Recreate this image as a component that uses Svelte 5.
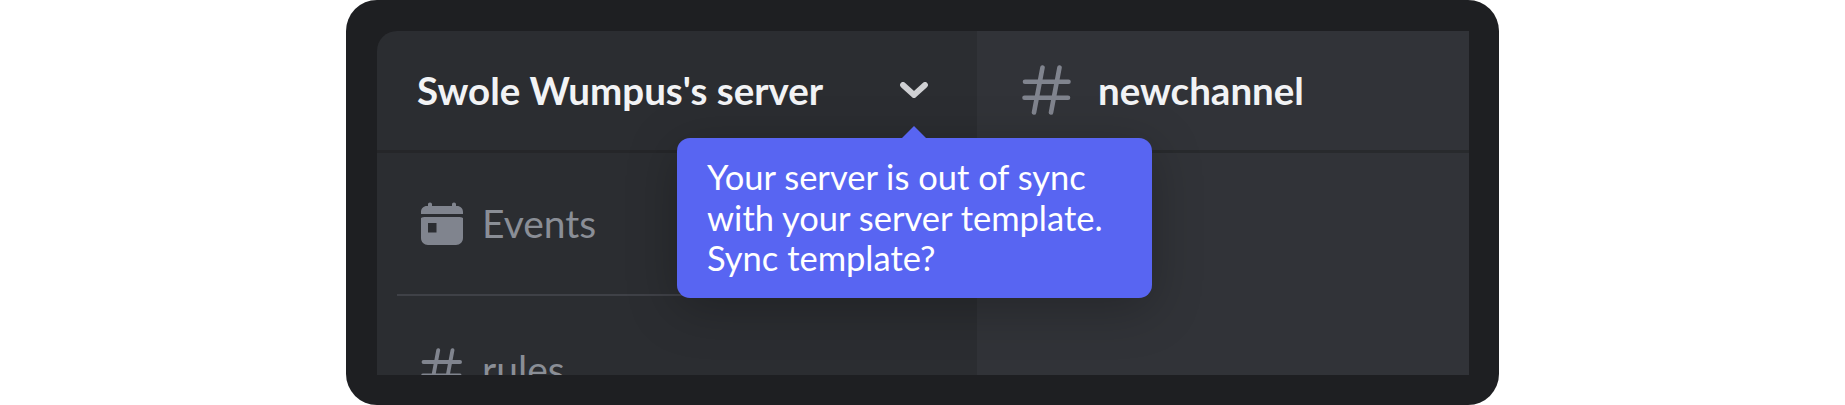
<script lang="ts">
    const tooltip = ["Your server is out of sync", "with your server template.", "Sync template?"];
</script>

{#snippet hash(cls: string)}
    <svg class={cls} viewBox="0 0 50 50" fill="none" stroke="currentColor" stroke-width="4.6" stroke-linecap="round">
        <path d="M20.5 2.5 12 47.5M37.5 2.5 29 47.5M3 16.7H46.5M2.5 32.7H46" />
    </svg>
{/snippet}

<div class="page">
    <div class="frame">
        <div class="app">
            <aside class="sidebar">
                <header class="bar server-bar">
                    <span class="server-name">Swole Wumpus's server</span>
                    <svg class="chevron" viewBox="0 0 28 16" fill="none" stroke="currentColor" stroke-width="5.8" stroke-linecap="round" stroke-linejoin="miter">
                        <path d="M3 3l11 10L25 3" />
                    </svg>
                </header>
                <div class="row events">
                    <svg class="calendar" viewBox="0 0 42 44" fill="currentColor">
                        <path d="M9 1.500c1.300 0 2 .8 2 2V5h20V3.500c0-1.200.7-2 2-2s2 .8 2 2V5h1c3.500 0 6 2.500 6 6v2H0v-2c0-3.500 2.500-6 6-6h1V3.500c0-1.200.7-2 2-2z" />
                        <path fill-rule="evenodd" d="M6 16h30c3.300 0 6 .5 6 1v20c0 3.900-3.100 7-7 7H7c-3.900 0-7-3.100-7-7V17c0-.5 2.700-1 6-1zm1 6v9.500h8.500V22H7z" />
                    </svg>
                    <span class="label">Events</span>
                </div>
                <div class="divider"></div>
                <div class="row rules">
                    {@render hash("rules-hash")}
                    <span class="label">rules</span>
                </div>
            </aside>
            <main class="main">
                <header class="bar channel-bar">
                    {@render hash("channel-hash")}
                    <span class="channel-name">newchannel</span>
                </header>
            </main>
            <div class="tooltip" role="tooltip">
                {#each tooltip as line}
                    <div>{line}</div>
                {/each}
            </div>
        </div>
    </div>
</div>

<style>
    :global(body) {
        margin: 0;
        background: #fff;
    }

    .page {
        display: flex;
        justify-content: center;
        height: 405px;
        font-family: Lato, "Noto Sans", sans-serif;
    }

    .frame {
        box-sizing: border-box;
        width: 1153px;
        height: 405px;
        padding: 31px 30px 30px 31px;
        background: #1e1f22;
        border-radius: 31px;
    }

    .app {
        position: relative;
        display: flex;
        height: 344px;
        overflow: hidden;
        border-top-left-radius: 20px;
    }

    .sidebar {
        flex: 0 0 600px;
        display: flex;
        flex-direction: column;
        background: #2b2d31;
        color: #80848e;
    }

    .main {
        flex: 1;
        background: #313338;
    }

    .bar {
        box-sizing: border-box;
        display: flex;
        align-items: center;
        flex: 0 0 122px;
        height: 122px;
        border-bottom: 3px solid rgba(30, 31, 34, 0.45);
    }

    .server-bar {
        padding: 0 49px 2px 40px;
        justify-content: space-between;
    }

    .server-name,
    .channel-name {
        font-size: 38.500px;
        font-weight: 700;
        color: #f2f3f5;
    }

    .chevron {
        width: 28px;
        height: 16px;
        margin-top: 1px;
        color: #cfd0d3;
    }

    .row {
        flex: none;
        display: flex;
        align-items: center;
        padding-left: 44px;
        font-size: 39px;
    }

    .label {
        color: #8a8e96;
    }

    .events {
        margin-top: 47px;
        gap: 19px;
    }

    .calendar {
        width: 42px;
        height: 44px;
    }

    .divider {
        flex: none;
        height: 2px;
        margin: 48px 0 0 20px;
        background: #3f4147;
    }

    .rules {
        margin-top: 50px;
        gap: 19px;
    }

    :global(.rules-hash) {
        width: 42px;
        height: 42px;
        flex: none;
    }

    .channel-bar {
        padding: 0 0 2px 45px;
        gap: 26px;
        color: #80848e;
    }

    :global(.channel-hash) {
        width: 50px;
        height: 50px;
        flex: none;
    }

    .tooltip {
        position: absolute;
        left: 300px;
        top: 107px;
        box-sizing: border-box;
        width: 475px;
        height: 160px;
        padding: 19px 30px;
        background: #5865f2;
        border-radius: 13px;
        color: #fff;
        font-size: 34.500px;
        line-height: 40.500px;
        box-shadow: 0 10px 50px rgba(0, 0, 0, 0.25);
    }

    .tooltip::before {
        content: "";
        position: absolute;
        left: 225px;
        top: -12px;
        border: 12px solid transparent;
        border-top: 0;
        border-bottom-color: #5865f2;
    }
</style>
